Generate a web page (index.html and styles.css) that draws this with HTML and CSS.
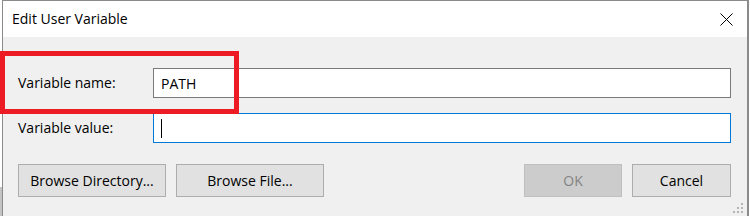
FILE: index.html
```html
<!DOCTYPE html>
<html lang="en">
<head>
<meta charset="utf-8">
<title>Edit User Variable</title>
<link rel="stylesheet" href="styles.css">
</head>
<body>
<div class="window">
  <div class="titlebar">
    <span class="title">Edit User Variable</span>
    <svg class="close" width="13" height="13" viewBox="0 0 13 13" aria-hidden="true">
      <path d="M0.5 0.5 L12.5 12.5 M12.5 0.5 L0.5 12.5" stroke="#000" stroke-width="1" fill="none"/>
    </svg>
  </div>
  <div class="content">
    <div class="form">
      <label class="label">Variable name:</label>
      <div class="field">PATH</div>
      <label class="label">Variable value:</label>
      <div class="field focused"><span class="caret"></span></div>
    </div>
    <div class="buttons">
      <div class="group">
        <div class="btn wide">Browse Directory...</div>
        <div class="btn wide">Browse File...</div>
      </div>
      <div class="group">
        <div class="btn ok disabled">OK</div>
        <div class="btn cancel">Cancel</div>
      </div>
    </div>
    <svg class="grip" width="12" height="12" viewBox="0 0 12 12" aria-hidden="true">
      <rect x="8" y="0" width="2" height="2" fill="#b4b4b4"/>
      <rect x="4" y="4" width="2" height="2" fill="#b4b4b4"/>
      <rect x="8" y="4" width="2" height="2" fill="#b4b4b4"/>
      <rect x="0" y="8" width="2" height="2" fill="#b4b4b4"/>
      <rect x="4" y="8" width="2" height="2" fill="#b4b4b4"/>
      <rect x="8" y="8" width="2" height="2" fill="#b4b4b4"/>
    </svg>
  </div>
</div>
<div class="highlight"></div>
</body>
</html>
```

FILE: styles.css
```css
html, body {
  margin: 0;
  padding: 0;
}
body {
  position: relative;
  width: 750px;
  height: 216px;
  overflow: hidden;
  background: linear-gradient(to bottom, #ffffff 0, #ffffff 187px, #c4c4c4 187px) no-repeat left top / 2px 216px, #ffffff;
  font-family: "Open Sans", "Noto Sans", sans-serif;
  font-size: 14px;
  color: #000;
}
.window {
  position: relative;
  margin-left: 2px;
  width: 747px;
  height: 216px;
  box-sizing: border-box;
  border-top: 1px solid #8a8a8a;
  border-left: 1px solid #8a8a8a;
  border-right: 2px solid #8a8a8a;
  background: #f0f0f0;
}
.titlebar {
  height: 36px;
  background: #ffffff;
  display: flex;
  align-items: center;
  justify-content: space-between;
  padding: 0 14px 0 9px;
}
.title {
  line-height: 20px;
}
.close {
  display: block;
}
.content {
  position: relative;
  padding: 31px 16px 0 15px;
  height: 179px;
  box-sizing: border-box;
}
.form {
  display: grid;
  grid-template-columns: 135px 1fr;
  grid-auto-rows: 30px;
  row-gap: 15px;
  align-items: center;
}
.label {
  line-height: 20px;
}
.field {
  height: 30px;
  box-sizing: border-box;
  background: #ffffff;
  border: 1px solid #7a7a7a;
  padding: 0 7px;
  display: flex;
  align-items: center;
}
.field.focused {
  border-color: #0078d7;
}
.caret {
  display: block;
  width: 1px;
  height: 19px;
  background: #000;
}
.buttons {
  margin-top: 21px;
  display: flex;
  justify-content: space-between;
}
.group {
  display: flex;
  gap: 10px;
}
.btn {
  height: 33px;
  box-sizing: border-box;
  background: #e1e1e1;
  border: 1px solid #adadad;
  display: flex;
  align-items: center;
  justify-content: center;
}
.btn.wide {
  width: 148px;
}
.btn.ok {
  width: 98px;
}
.btn.cancel {
  width: 99px;
}
.btn.disabled {
  background: #cccccc;
  border-color: #bfbfbf;
  color: #838383;
}
.grip {
  position: absolute;
  right: 2px;
  top: 166px;
}
.highlight {
  position: absolute;
  left: 0;
  top: 51px;
  width: 239px;
  height: 63px;
  box-sizing: border-box;
  border: 5px solid #ed1c24;
}
```
